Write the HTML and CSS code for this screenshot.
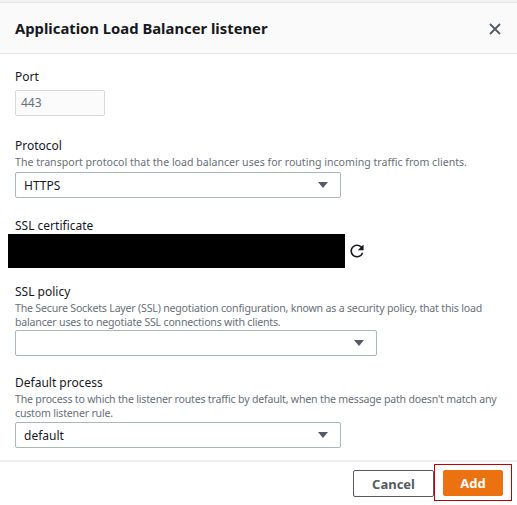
FILE: index.html
```html
<!DOCTYPE html>
<html lang="en">
<head>
<meta charset="utf-8">
<title>Application Load Balancer listener</title>
<link rel="stylesheet" href="styles.css">
</head>
<body>
<div class="topstrip"></div>
<header class="modal-header">
  <h1 class="modal-title">Application Load Balancer listener</h1>
  <button class="close-btn" aria-label="Close">
    <svg width="12" height="12" viewBox="0 0 12 12"><path d="M1 1L11 11M11 1L1 11" stroke="#545b64" stroke-width="1.8" fill="none"/></svg>
  </button>
</header>
<main class="modal-body">
  <div class="field field-port">
    <div class="label">Port</div>
    <div class="input-box">443</div>
  </div>

  <div class="field field-protocol">
    <div class="label">Protocol</div>
    <div class="desc">The transport protocol that the load balancer uses for routing incoming traffic from clients.</div>
    <div class="select sel-protocol"><span class="sel-value">HTTPS</span><span class="caret"></span></div>
  </div>

  <div class="field field-cert">
    <div class="label">SSL certificate</div>
    <div class="cert-row">
      <div class="redacted"></div>
      <svg class="refresh" width="14" height="14" viewBox="3.5 3.5 17 17">
        <path fill="#16191f" d="M17.65 6.35A7.958 7.958 0 0 0 12 4c-4.42 0-7.99 3.58-7.99 8s3.57 8 7.99 8c3.73 0 6.840-2.55 7.73-6h-2.08A5.99 5.99 0 0 1 12 18c-3.31 0-6-2.690-6-6s2.69-6 6-6c1.66 0 3.14.69 4.22 1.78L13 11h7V4l-2.35 2.350z"/>
      </svg>
    </div>
  </div>

  <div class="field field-policy">
    <div class="label">SSL policy</div>
    <div class="desc desc-tight">The Secure Sockets Layer (SSL) negotiation configuration, known as a security policy, that this load<br>balancer uses to negotiate SSL connections with clients.</div>
    <div class="select sel-policy"><span class="sel-value"></span><span class="caret"></span></div>
  </div>

  <div class="field field-process">
    <div class="label">Default process</div>
    <div class="desc desc-tight">The process to which the listener routes traffic by default, when the message path doesn't match any<br>custom listener rule.</div>
    <div class="select sel-process"><span class="sel-value">default</span><span class="caret"></span></div>
  </div>
</main>
<footer class="modal-footer">
  <button class="btn btn-cancel">Cancel</button>
  <span class="highlight"><button class="btn btn-add">Add</button></span>
</footer>
</body>
</html>
```

FILE: styles.css
```css
* { box-sizing: border-box; }
html, body {
  margin: 0;
  padding: 0;
  background: #ffffff;
  width: 517px;
  height: 505px;
  overflow: hidden;
  font-family: "Noto Sans", "Open Sans", "Liberation Sans", sans-serif;
  color: #16191f;
}
.topstrip {
  height: 3px;
  background: #f2f3f3;
  border-bottom: 1px solid #e6e8e8;
}
.modal-header {
  height: 51px;
  background: #fafafa;
  border-bottom: 1px solid #e3e5e5;
  display: flex;
  align-items: center;
  justify-content: space-between;
  padding: 0 16px 0 15px;
}
.modal-title {
  margin: 0;
  font-size: 14.8px;
  font-weight: 700;
  color: #16191f;
  line-height: 20px;
}
.close-btn {
  border: 0;
  background: transparent;
  padding: 0;
  width: 12px;
  height: 12px;
  display: flex;
  margin-top: 1px;
}
.modal-body {
  padding: 14px 15px 0 15px;
}
.field { display: flex; flex-direction: column; align-items: flex-start; }
.label {
  font-size: 12px;
  line-height: 16px;
  padding-top: 1px;
  color: #16191f;
}
.desc {
  font-size: 10.6px;
  line-height: 14px;
  color: #687078;
  margin-top: 1px;
  white-space: nowrap;
}
.desc-tight { letter-spacing: -0.2px; }
.input-box {
  margin-top: 5px;
  width: 90px;
  height: 26px;
  border: 1px solid #d5dbdb;
  border-radius: 2px;
  background: #fbfbfb;
  color: #687078;
  font-size: 12px;
  line-height: 24px;
  padding-left: 5px;
}
.select {
  margin-top: 2px;
  height: 26px;
  border: 1px solid #aab7b8;
  border-radius: 2px;
  background: #fff;
  display: flex;
  align-items: center;
  justify-content: space-between;
  padding: 0 12px 0 8px;
}
.sel-value {
  font-size: 12px;
  color: #16191f;
}
.sel-protocol { width: 326px; margin-top: 3px; }
.sel-policy { width: 362px; margin-top: 1px; }
.sel-process { width: 326px; }
.caret {
  width: 0; height: 0;
  border-left: 5px solid transparent;
  border-right: 5px solid transparent;
  border-top: 6px solid #545b64;
}
.field-protocol { margin-top: 21px; }
.field-cert { margin-top: 19px; }
.field-policy { margin-top: 15px; }
.field-process { margin-top: 18px; }
.cert-row {
  display: flex;
  align-items: center;
  margin-left: -7px;
}
.redacted {
  width: 337px;
  height: 34px;
  background: #000;
}
.refresh { margin-left: 5px; }
.modal-footer {
  margin-top: 12px;
  border-top: 2px solid #eef0f0;
  display: flex;
  justify-content: flex-end;
  align-items: flex-start;
  padding: 2px 5px 0 0;
}
.btn {
  font-family: inherit;
  font-size: 13px;
  font-weight: 700;
  border-radius: 2px;
  height: 27px;
  cursor: pointer;
}
.btn-cancel {
  margin-top: 6px;
  background: #fff;
  color: #545b64;
  border: 1px solid #545b64;
  padding: 0 18px;
  margin-right: 0;
}
.highlight {
  border: 1px solid #c40000;
  padding: 5px 8px 4px 8px;
  display: flex;
}
.btn-add {
  background: #ec7211;
  border: 1px solid #ec7211;
  color: #fff;
  width: 60px;
  height: 26px;
  padding: 0;
}
```
